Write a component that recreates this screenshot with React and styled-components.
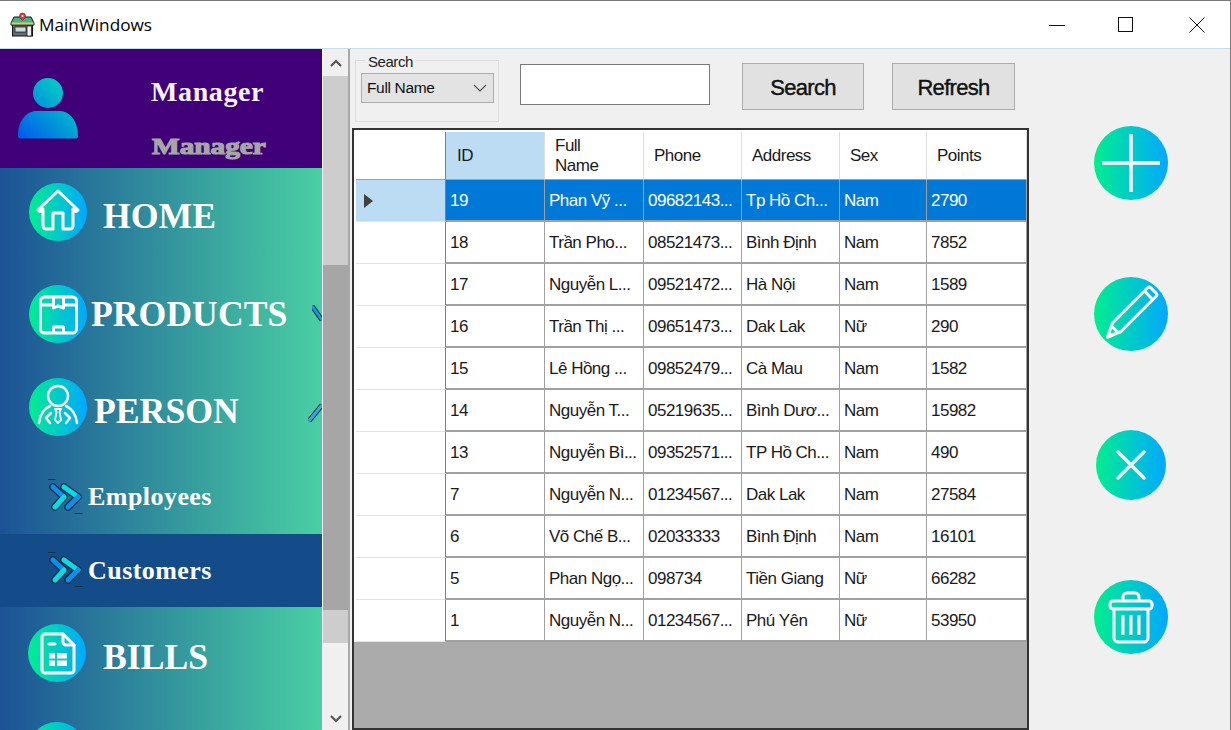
import React from "react";
import styled, { createGlobalStyle } from "styled-components";

const GlobalStyle = createGlobalStyle`
  html, body {
    margin: 0;
    padding: 0;
    background: #f0f0f0;
    overflow: hidden;
  }
  * {
    box-sizing: border-box;
  }
`;

const Window = styled.div`
  width: 1231px;
  height: 730px;
  display: flex;
  flex-direction: column;
  overflow: hidden;
  border-top: 1px solid #7a7a7a;
  border-right: 1px solid #7a7a7a;
  font-family: "Liberation Sans", Arial, sans-serif;
`;

const TitleBar = styled.div`
  height: 48px;
  flex: none;
  display: flex;
  align-items: center;
  background: #fff;
  border-bottom: 1px solid #c5deec;
  padding-left: 10px;
`;

const TitleText = styled.span`
  margin-left: 4px;
  font-family: "Open Sans", sans-serif;
  font-size: 17.2px;
  color: #000;
`;

const WindowButtons = styled.div`
  margin-left: auto;
  margin-right: -2px;
  display: flex;
`;

const WindowButton = styled.div`
  width: ${(p) => p.$width}px;
  height: 46px;
  display: flex;
  align-items: center;
  justify-content: center;
`;

const Body = styled.div`
  flex: 1;
  min-height: 0;
  display: flex;
`;

const Sidebar = styled.div`
  width: 322px;
  flex: none;
  overflow: hidden;
`;

const Profile = styled.div`
  height: 119px;
  display: flex;
  align-items: center;
  padding: 0 0 2px 16px;
  background: #3f0078;
`;

const Names = styled.div`
  margin-left: 71px;
  padding-top: 17px;
  display: flex;
  flex-direction: column;
  gap: 27px;
  font-family: "Liberation Serif", serif;
  font-weight: bold;
`;

const UserName = styled.div`
  font-size: 28px;
  line-height: 32px;
  letter-spacing: 0.6px;
  color: #f6f2ff;
`;

const UserRole = styled.div`
  font-size: 24px;
  line-height: 22px;
  margin-left: 1px;
  color: #a6a6a6;
  -webkit-text-stroke: 1.2px #a6a6a6;
  transform: scaleX(1.22);
  transform-origin: left center;
`;

const NavRow = styled.div`
  position: relative;
  height: ${(p) => p.$height}px;
  padding: ${(p) => p.$top}px 0 0 ${(p) => p.$left}px;
  display: flex;
  align-items: flex-start;
  gap: ${(p) => p.$gap}px;
  background: linear-gradient(90deg, #1b5396, #49cfa3);
`;

const NavCircle = styled.div`
  width: 58px;
  height: 58px;
  flex: none;
  border-radius: 50%;
  background: linear-gradient(90deg, #00ee90, #00a8ff);
`;

const NavLabel = styled.div`
  margin-top: ${(p) => p.$shift}px;
  font-family: "Liberation Serif", serif;
  font-weight: bold;
  font-size: 35.7px;
  line-height: 40px;
  color: #fff;
`;

const SubRow = styled.div`
  height: ${(p) => p.$height}px;
  padding-left: 48px;
  display: flex;
  align-items: center;
  gap: 5px;
  background: ${(p) =>
    p.$active ? "#134c88" : "linear-gradient(90deg, #1b5396, #49cfa3)"};
`;

const SubLabel = styled.div`
  font-family: "Liberation Serif", serif;
  font-weight: bold;
  font-size: 26px;
  letter-spacing: 0.45px;
  color: #fff;
`;

const Sliver = styled.svg`
  position: absolute;
  right: 0;
  top: ${(p) => p.$top}px;
`;

const ScrollTrack = styled.div`
  width: 28px;
  flex: none;
  display: flex;
  flex-direction: column;
  background: #f0f0f0;
  border-left: 1px solid #fff;
  border-right: 2px solid #a8a8a8;
`;

const ScrollArrow = styled.div`
  height: ${(p) => p.$height}px;
  flex: none;
  display: flex;
  align-items: center;
  justify-content: center;
`;

const ScrollPiece = styled.div`
  height: ${(p) => p.$height}px;
  flex: none;
  background: ${(p) => p.$color};
`;

const Main = styled.div`
  width: 680px;
  flex: none;
  display: flex;
  flex-direction: column;
  padding: 0 0 0 2px;
`;

const Toolbar = styled.div`
  height: 79px;
  flex: none;
  display: flex;
  align-items: flex-start;
`;

const GroupBox = styled.div`
  position: relative;
  width: 144px;
  height: 62px;
  margin: 11px 0 0 3px;
  padding: 12px 0 0 5px;
  border: 1px solid #dcdcdc;
`;

const Legend = styled.span`
  position: absolute;
  top: -8px;
  left: 9px;
  padding: 0 3px;
  background: #f0f0f0;
  font-size: 15px;
  letter-spacing: -0.45px;
  color: #222;
`;

const ComboBox = styled.div`
  width: 133px;
  height: 30px;
  display: flex;
  align-items: center;
  justify-content: space-between;
  padding: 0 6px 0 5px;
  background: #e3e3e3;
  border: 1px solid #adadad;
  font-size: 15.5px;
  letter-spacing: -0.35px;
  color: #111;
`;

const SearchInput = styled.div`
  width: 190px;
  height: 41px;
  margin: 15px 0 0 21px;
  background: #fff;
  border: 1px solid #7a7a7a;
`;

const ActionButton = styled.div`
  width: ${(p) => p.$width}px;
  height: 47px;
  margin: 14px 0 0 ${(p) => p.$left}px;
  padding-top: 2px;
  display: flex;
  align-items: center;
  justify-content: center;
  background: #e1e1e1;
  border: 1px solid #adadad;
  font-size: 22px;
  letter-spacing: -0.7px;
  -webkit-text-stroke: 0.4px #111;
  color: #111;
`;

const GridFrame = styled.div`
  flex: 1;
  min-height: 0;
  width: 677px;
  background: #ababab;
  border: 2px solid #333;
  overflow: hidden;
`;

const Table = styled.table`
  width: 673px;
  table-layout: fixed;
  border-collapse: separate;
  border-spacing: 0;
  border-top: 2px solid #fff;
  border-left: 2px solid #fff;
  font-size: 17px;
  letter-spacing: -0.5px;
  color: #1a1a1a;
`;

const HeadCell = styled.th`
  height: 48px;
  padding: 0 0 0 ${(p) => (p.$active ? 11 : 10)}px;
  text-align: left;
  font-weight: normal;
  line-height: 20px;
  background: ${(p) => (p.$active ? "#bcdcf4" : "#fff")};
  border-right: 1px solid #dedede;
  border-bottom: 1px solid #a0a0a0;
`;

const CornerCell = styled(HeadCell)`
  border-right: 1px solid #808080;
`;

const Cell = styled.td`
  height: 42px;
  padding: 2px 0 0 4px;
  white-space: nowrap;
  overflow: hidden;
  background: ${(p) => (p.$selected ? "#0078d7" : "#fff")};
  color: ${(p) => (p.$selected ? "#fff" : "#1a1a1a")};
  border-right: 1px solid #a0a0a0;
  border-bottom: 2px solid #a0a0a0;
`;

const RowHead = styled.td`
  height: 42px;
  padding: 0 0 0 8px;
  background: ${(p) => (p.$selected ? "#bcdcf4" : "#fff")};
  border-right: 1px solid #808080;
  border-bottom: 1px solid #e4e4e4;
`;

const RowArrow = styled.div`
  width: 0;
  height: 0;
  border-left: 9px solid #404040;
  border-top: 7px solid transparent;
  border-bottom: 7px solid transparent;
`;

const SidePanel = styled.div`
  flex: 1;
  display: flex;
  flex-direction: column;
  align-items: center;
  padding: 77px 0 0 2px;
`;

const ToolCircle = styled.div`
  width: ${(p) => p.$size}px;
  height: ${(p) => p.$size}px;
  margin-bottom: ${(p) => p.$below}px;
  border-radius: 50%;
  background: linear-gradient(90deg, #00ee90, #00a8ff);
`;

const rows = [
  ["19", "Phan Vỹ ...", "09682143...", "Tp Hồ Ch...", "Nam", "2790"],
  ["18", "Trần Pho...", "08521473...", "Bình Định", "Nam", "7852"],
  ["17", "Nguyễn L...", "09521472...", "Hà Nội", "Nam", "1589"],
  ["16", "Trần Thị ...", "09651473...", "Dak Lak", "Nữ", "290"],
  ["15", "Lê Hồng ...", "09852479...", "Cà Mau", "Nam", "1582"],
  ["14", "Nguyễn T...", "05219635...", "Bình Dươ...", "Nam", "15982"],
  ["13", "Nguyễn Bì...", "09352571...", "TP Hồ Ch...", "Nam", "490"],
  ["7", "Nguyễn N...", "01234567...", "Dak Lak", "Nam", "27584"],
  ["6", "Võ Chế B...", "02033333", "Bình Định", "Nam", "16101"],
  ["5", "Phan Ngọ...", "098734", "Tiền Giang", "Nữ", "66282"],
  ["1", "Nguyễn N...", "01234567...", "Phú Yên", "Nữ", "53950"],
];

const StoreIcon = () => (
  <svg width="25" height="25" viewBox="0 0 25 25">
    <rect x="2.5" y="11" width="20" height="13" fill="#5f6f78" stroke="#111" />
    <rect x="5" y="15" width="11" height="5" fill="#cfd8dc" stroke="#111" strokeWidth="0.7" />
    <rect x="17" y="14" width="4.5" height="10" fill="#eceff1" stroke="#111" strokeWidth="0.7" />
    <path d="M4 5h17l3 6v2H1v-2z" fill="#3fb58f" stroke="#111" />
    <path d="M1.5 10.5h22v2h-22z" fill="#f2c14e" />
    <path d="M12.5 1a3 3 0 0 1 3 3c0 2-3 4.5-3 4.5S9.500 6 9.500 4a3 3 0 0 1 3-3z" fill="#e23d3d" stroke="#7a1616" strokeWidth="0.6" />
    <circle cx="12.5" cy="4" r="1" fill="#fff" />
  </svg>
);

const HomeIcon = () => (
  <svg width="58" height="58" viewBox="0 0 58 58" fill="none" stroke="#fff" strokeWidth="3" strokeLinejoin="round" strokeLinecap="round">
    <path d="M9 27 29 8l20 19-2 1.500-3-2.500v17a3 3 0 0 1-3 3h-7V30h-10v16h-7a3 3 0 0 1-3-3V26l-3 2.500z" />
  </svg>
);

const BoxIcon = () => (
  <svg width="58" height="58" viewBox="0 0 58 58" fill="none" stroke="#fff" strokeWidth="3" strokeLinejoin="round">
    <rect x="11.500" y="12" width="36" height="36" rx="4" />
    <path d="M11.500 20h13m10 0h13M24.500 12v11l4.500-2 5.500 2V12M24.500 48v-6h10v6" />
  </svg>
);

const PersonIcon = () => (
  <svg width="58" height="58" viewBox="0 0 58 58" fill="none" stroke="#fff" strokeWidth="2.500" strokeLinecap="round" strokeLinejoin="round">
    <circle cx="29" cy="18" r="10" />
    <path d="M21 28C14 31 11 37 10 45M37 28c7 3 10 9 11 17" />
    <path d="M22 35l-5 5 4 5M36 35l5 5-4 5" />
    <path d="M26 31h6l-1.500 3 1.500 8-3 3-3-3 1.500-8z" strokeWidth="1.800" />
  </svg>
);

const BillIcon = () => (
  <svg width="58" height="58" viewBox="0 0 58 58" fill="none" stroke="#fff" strokeWidth="3" strokeLinejoin="round" strokeLinecap="round">
    <path d="M17 10h18l11 11v25a3 3 0 0 1-3 3H17a3 3 0 0 1-3-3V13a3 3 0 0 1 3-3z" />
    <path d="M35 10v8a3 3 0 0 0 3 3h8M21 20h6" />
    <rect x="21" y="29" width="18" height="13" fill="#fff" stroke="none" />
    <path d="M21 35.500h18M28 29v13" stroke="#14c9c0" strokeWidth="2" />
  </svg>
);

const Chevrons = () => (
  <svg width="35" height="37" viewBox="-2 -3 35 37" fill="none" strokeLinecap="round" strokeLinejoin="round">
    <path d="M-2-2.500h7M25 31.500h7" stroke="#12303f" strokeWidth="1" />
    <g stroke="#12303f" strokeWidth="7.500">
      <path d="M3 5l11 10M14 15 5 25M14 5l14 10M28 15 18 25" />
    </g>
    <path d="M3 5l11 10" stroke="#0a90f0" strokeWidth="5" />
    <path d="M14 15 5 25" stroke="#08dce8" strokeWidth="5" />
    <path d="M14 5l14 10" stroke="#08dce8" strokeWidth="5" />
    <path d="M28 15 18 25" stroke="#0a90f0" strokeWidth="5" />
  </svg>
);

const Avatar = () => (
  <svg width="64" height="64" viewBox="0 0 64 64">
    <defs>
      <linearGradient id="avatarFill" x1="0" y1="1" x2="1" y2="0">
        <stop offset="0" stopColor="#0058ee" />
        <stop offset="0.75" stopColor="#00c4c8" />
        <stop offset="1" stopColor="#00d6c0" />
      </linearGradient>
    </defs>
    <path
      fill="url(#avatarFill)"
      d="M32 2a15 15 0 1 1 0 30 15 15 0 0 1 0-30zM21 35h22c11 0 19 10 19 25 0 1.500-1 2.500-2 2.500H4c-1 0-2-1-2-2.500C2 45 10 35 21 35z"
    />
  </svg>
);

const PencilIcon = () => (
  <svg width="74" height="74" viewBox="0 0 74 74" fill="none" stroke="#fff" strokeWidth="3" strokeLinejoin="round">
    <path d="M13.500 60l5-14 35-35a2.500 2.500 0 0 1 3.500 0l5 5a2.500 2.500 0 0 1 0 3.500l-35 35z" />
    <path d="M51 14.500l7.500 8M17.500 49l6 6" />
    <path d="M13.500 60l4-1.500-2.500-2.500z" fill="#fff" />
  </svg>
);

const TrashIcon = () => (
  <svg width="74" height="74" viewBox="0 0 74 74" fill="none" stroke="#fff" strokeWidth="3" strokeLinejoin="round" strokeLinecap="round">
    <path d="M29 20v-3a4 4 0 0 1 4-4h8a4 4 0 0 1 4 4v3" />
    <rect x="16" y="21" width="42" height="8" rx="3" />
    <path d="M20 29v29a4 4 0 0 0 4 4h26a4 4 0 0 0 4-4V29" />
    <path d="M29 35v20M37 35v20M45 35v20" strokeLinecap="butt" />
  </svg>
);

const App = () => {
  return (
    <Window>
      <GlobalStyle />
      <TitleBar>
        <StoreIcon />
        <TitleText>MainWindows</TitleText>
        <WindowButtons>
          <WindowButton $width={67}>
            <svg width="16" height="16" viewBox="0 0 16 16" stroke="#111">
              <path d="M0 8.500h16" />
            </svg>
          </WindowButton>
          <WindowButton $width={71}>
            <svg width="15" height="15" viewBox="0 0 15 15" fill="none" stroke="#111">
              <rect x=".5" y=".5" width="14" height="14" />
            </svg>
          </WindowButton>
          <WindowButton $width={71}>
            <svg width="16" height="16" viewBox="0 0 16 16" stroke="#111">
              <path d="M.5.5l15 15M15.500.5l-15 15" />
            </svg>
          </WindowButton>
        </WindowButtons>
      </TitleBar>
      <Body>
        <Sidebar>
          <Profile>
            <Avatar />
            <Names>
              <UserName>Manager</UserName>
              <UserRole>Manager</UserRole>
            </Names>
          </Profile>
          <NavRow $height={98} $top={15} $left={29} $gap={16}>
            <NavCircle><HomeIcon /></NavCircle>
            <NavLabel $shift={13}>HOME</NavLabel>
          </NavRow>
          <NavRow $height={96} $top={19} $left={29} $gap={4}>
            <NavCircle><BoxIcon /></NavCircle>
            <NavLabel $shift={9}>PRODUCTS</NavLabel>
            <Sliver $top={39} width="10" height="18" viewBox="0 0 10 18">
              <path d="M0 1l10 14" stroke="#12303f" strokeWidth="5" />
              <path d="M0 1l10 14" stroke="#0a9fe0" strokeWidth="3" />
            </Sliver>
          </NavRow>
          <NavRow $height={98} $top={16} $left={29} $gap={7}>
            <NavCircle><PersonIcon /></NavCircle>
            <NavLabel $shift={13}>PERSON</NavLabel>
            <Sliver $top={40} width="14" height="20" viewBox="0 0 14 20">
              <path d="M1 19 14 3" stroke="#12303f" strokeWidth="5" />
              <path d="M1 19 14 3" stroke="#3aa6e0" strokeWidth="3" />
            </Sliver>
          </NavRow>
          <SubRow $height={74}>
            <Chevrons />
            <SubLabel>Employees</SubLabel>
          </SubRow>
          <SubRow $height={73} $active>
            <Chevrons />
            <SubLabel>Customers</SubLabel>
          </SubRow>
          <NavRow $height={98} $top={17} $left={28} $gap={17}>
            <NavCircle><BillIcon /></NavCircle>
            <NavLabel $shift={13}>BILLS</NavLabel>
          </NavRow>
          <NavRow $height={40} $top={17} $left={28} $gap={17}>
            <NavCircle />
          </NavRow>
        </Sidebar>

        <ScrollTrack>
          <ScrollArrow $height={27}>
            <svg width="12" height="8" viewBox="0 0 12 8" fill="none" stroke="#555" strokeWidth="2.200">
              <path d="M1 7l5-5 5 5" />
            </svg>
          </ScrollArrow>
          <ScrollPiece $height={189} $color="#cdcdcd" />
          <ScrollPiece $height={345} $color="#a6a6a6" />
          <ScrollPiece $height={33} $color="#cdcdcd" />
          <ScrollPiece $height={65} $color="#f0f0f0" />
          <ScrollArrow $height={22}>
            <svg width="12" height="8" viewBox="0 0 12 8" fill="none" stroke="#555" strokeWidth="2.200">
              <path d="M1 1l5 5 5-5" />
            </svg>
          </ScrollArrow>
        </ScrollTrack>

        <Main>
          <Toolbar>
            <GroupBox>
              <Legend>Search</Legend>
              <ComboBox>
                Full Name
                <svg width="14" height="8" viewBox="0 0 14 8" fill="none" stroke="#555" strokeWidth="1.200">
                  <path d="M1 1l6 6 6-6" />
                </svg>
              </ComboBox>
            </GroupBox>
            <SearchInput />
            <ActionButton $width={122} $left={32}>Search</ActionButton>
            <ActionButton $width={123} $left={28}>Refresh</ActionButton>
          </Toolbar>
          <GridFrame>
            <Table>
              <colgroup>
                <col style={{ width: 90 }} />
                <col style={{ width: 99 }} />
                <col style={{ width: 99 }} />
                <col style={{ width: 98 }} />
                <col style={{ width: 98 }} />
                <col style={{ width: 87 }} />
                <col style={{ width: 100 }} />
              </colgroup>
              <thead>
                <tr>
                  <CornerCell />
                  <HeadCell $active>ID</HeadCell>
                  <HeadCell>Full<br />Name</HeadCell>
                  <HeadCell>Phone</HeadCell>
                  <HeadCell>Address</HeadCell>
                  <HeadCell>Sex</HeadCell>
                  <HeadCell>Points</HeadCell>
                </tr>
              </thead>
              <tbody>
                {rows.map((row, i) => (
                  <tr key={row[0]}>
                    <RowHead $selected={i === 0}>{i === 0 && <RowArrow />}</RowHead>
                    {row.map((value, j) => (
                      <Cell key={j} $selected={i === 0}>{value}</Cell>
                    ))}
                  </tr>
                ))}
              </tbody>
            </Table>
          </GridFrame>
        </Main>

        <SidePanel>
          <ToolCircle $size={74} $below={77}>
            <svg width="74" height="74" viewBox="0 0 74 74" stroke="#fff" strokeWidth="3.500">
              <path d="M37 8v58M8 37h58" />
            </svg>
          </ToolCircle>
          <ToolCircle $size={74} $below={79}><PencilIcon /></ToolCircle>
          <ToolCircle $size={70} $below={80}>
            <svg width="70" height="70" viewBox="0 0 70 70" stroke="#f0f0f0" strokeWidth="3.500" strokeLinecap="round">
              <path d="M22 22l26 26M48 22 22 48" />
            </svg>
          </ToolCircle>
          <ToolCircle $size={74} $below={0}><TrashIcon /></ToolCircle>
        </SidePanel>
      </Body>
    </Window>
  );
};

export default App;
